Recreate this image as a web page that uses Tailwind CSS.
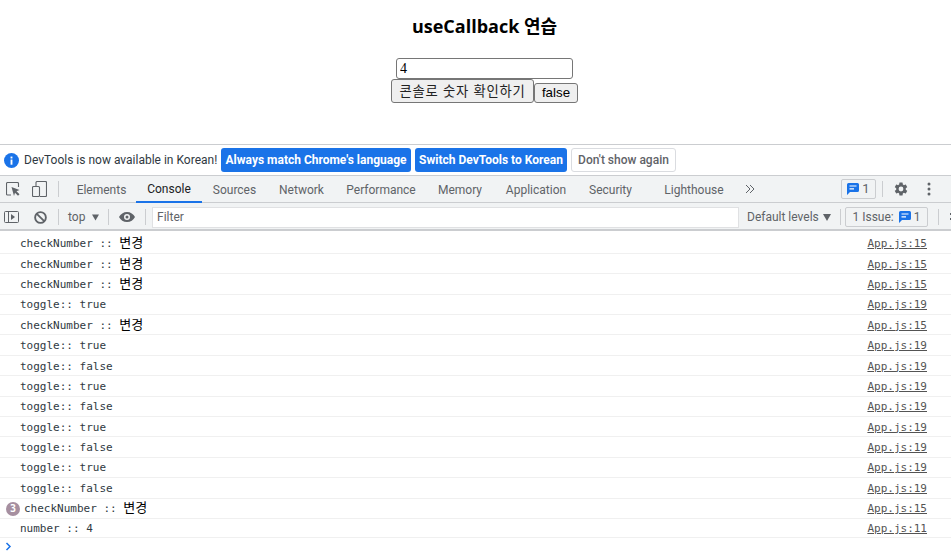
<!DOCTYPE html>
<html lang="ko">

<head>
    <meta charset="UTF-8">
    <title>useCallback</title>
    <script src="https://cdn.jsdelivr.net/npm/@tailwindcss/browser@4"></script>
</head>

<body class="bg-white h-[559px] w-[951px] overflow-hidden font-['Roboto','Noto_Sans_CJK_KR',sans-serif]">
    <!-- App -->
    <div class="h-[144px] w-[969px] flex flex-col items-center pt-[14px] font-['Open_Sans','Noto_Sans_CJK_KR',sans-serif]">
        <h3 class="text-[18px] leading-[24px] font-bold text-black mb-[20px]">useCallback 연습</h3>
        <input value="4" class="w-[177px] h-[21px] border border-[#767676] rounded-[3px] px-[3px] text-[14px] text-black font-['Liberation_Serif',serif] outline-none">
        <div class="flex items-end">
            <button class="w-[143px] h-[24px] bg-[#efefef] border border-[#767676] rounded-[3px] text-[13.33px] leading-none text-[#222] tracking-[0.75px] font-['Noto_Sans_CJK_KR',sans-serif]">콘솔로 숫자 확인하기</button>
            <button class="w-[44px] h-[20px] bg-[#efefef] border border-[#767676] rounded-[3px] text-[13.33px] leading-none text-black font-['Liberation_Sans',sans-serif]">false</button>
        </div>
    </div>

    <!-- Infobar -->
    <div class="h-[32px] border-y border-[#cbcdd0] flex items-center text-[12px] text-[#303942] pl-[4px]">
        <svg class="w-[15px] h-[15px] mr-[5px]" viewBox="0 0 16 16">
            <circle cx="8" cy="8" r="8" fill="#1a73e8" />
            <rect x="7" y="7" width="2" height="5.5" fill="#fff" />
            <rect x="7" y="3.8" width="2" height="2" fill="#fff" />
        </svg>
        <span class="w-[197px] whitespace-nowrap">DevTools is now available in Korean!</span>
        <button class="h-[24px] w-[190px] bg-[#1a73e8] text-white font-bold rounded-[3px] mr-[4px] whitespace-nowrap">Always match Chrome's language</button>
        <button class="h-[24px] w-[152px] bg-[#1a73e8] text-white font-bold rounded-[3px] mr-[4px] whitespace-nowrap">Switch DevTools to Korean</button>
        <button class="h-[24px] w-[105px] bg-white border border-[#dadce0] text-[#5f6368] font-medium rounded-[3px] whitespace-nowrap">Don't show again</button>
    </div>

    <!-- Tabs -->
    <div class="h-[27px] bg-[#f1f3f4] border-b border-[#cbcdd0] flex items-center text-[12px] text-[#5f6368]">
        <svg class="w-[14px] h-[14px] ml-[6px]" viewBox="0 0 14 14" fill="none">
            <path d="M5 13H1.500a1 1 0 0 1-1-1V1.500a1 1 0 0 1 1-1h10a1 1 0 0 1 1 1V5" stroke="#5f6368" stroke-width="1.100" />
            <path d="M5.500 5l8 3-3 1.300 3 3-1.500 1.500-3-3L8 14z" fill="#5f6368" />
        </svg>
        <svg class="w-[15px] h-[16px] ml-[12px]" viewBox="0 0 15 16" fill="none">
            <path d="M4 5V1.500a1 1 0 0 1 1-1h8.500a1 1 0 0 1 1 1v13a1 1 0 0 1-1 1H8" stroke="#5f6368" stroke-width="1.100" />
            <rect x="0.500" y="5.500" width="7" height="10" rx="1" stroke="#5f6368" stroke-width="1.100" />
        </svg>
        <div class="w-px h-[16px] bg-[#cbcdd0] ml-[11px] mr-[8px]"></div>
        <div class="flex items-center h-full pt-[2px]">
            <div class="w-[69px] text-center">Elements</div>
            <div class="w-[66px] h-[26px] self-end -mb-px flex items-center justify-center text-[#202124] border-b-2 border-[#1a73e8]">Console</div>
            <div class="w-[65px] text-center">Sources</div>
            <div class="w-[69px] text-center">Network</div>
            <div class="w-[90px] text-center">Performance</div>
            <div class="w-[68px] text-center">Memory</div>
            <div class="w-[84px] text-center">Application</div>
            <div class="w-[65px] text-center">Security</div>
            <div class="w-[102px] text-center">Lighthouse</div>
        </div>
        <svg class="w-[10px] h-[10px]" viewBox="0 0 10 10" fill="none" stroke="#5f6368" stroke-width="1">
            <path d="M1 1l4 4-4 4M5 1l4 4-4 4" />
        </svg>
        <div class="ml-auto flex items-center">
            <div class="w-[35px] h-[20px] border border-[#cbcdd0] rounded-[2px] flex items-center justify-center gap-[3px] text-[13px]">
                <svg class="w-[12px] h-[12px]" viewBox="0 0 12 12">
                    <path d="M1.500 0h9A1.500 1.500 0 0 1 12 1.500v6A1.500 1.500 0 0 1 10.500 9H3l-3 3V1.500A1.500 1.500 0 0 1 1.500 0z" fill="#1a73e8" />
                    <path d="M2.500 3h7M2.500 5.800h4.500" stroke="#fff" stroke-width="1.200" />
                </svg>
                <span>1</span>
            </div>
            <div class="w-px h-[16px] bg-[#cbcdd0] ml-[6px] mr-[10px]"></div>
            <svg class="w-[16px] h-[16px]" viewBox="0 0 24 24">
                <path fill="#5f6368" d="M19.140 12.940c.04-.300.060-.610.060-.940 0-.320-.020-.640-.070-.940l2.030-1.580a.490.490 0 0 0 .120-.610l-1.920-3.320a.488.488 0 0 0-.590-.220l-2.390.960c-.500-.380-1.030-.700-1.620-.940l-.360-2.540a.484.484 0 0 0-.480-.410h-3.840c-.240 0-.430.170-.470.410l-.360 2.540c-.590.240-1.130.570-1.620.940l-2.390-.960c-.220-.080-.470 0-.590.220L2.740 8.870c-.120.210-.080.470.120.610l2.030 1.580c-.050.300-.090.630-.090.940s.020.640.070.940l-2.030 1.580a.490.490 0 0 0-.120.610l1.920 3.320c.120.220.370.290.590.220l2.390-.960c.500.380 1.030.700 1.620.940l.360 2.540c.050.240.240.410.48.410h3.840c.240 0 .440-.170.470-.410l.360-2.540c.590-.240 1.130-.560 1.620-.940l2.390.960c.220.080.470 0 .590-.220l1.920-3.320c.120-.220.070-.470-.120-.610l-2.010-1.580zM12 15.600A3.600 3.600 0 1 1 12 8.400a3.600 3.600 0 0 1 0 7.200z" />
            </svg>
            <svg class="w-[4px] h-[14px] ml-[18px] mr-[20px]" viewBox="0 0 4 14" fill="#5f6368">
                <circle cx="2" cy="2" r="1.500" />
                <circle cx="2" cy="7" r="1.500" />
                <circle cx="2" cy="12" r="1.500" />
            </svg>
        </div>
    </div>

    <!-- Console toolbar -->
    <div class="h-[28px] pt-[2px] bg-[#f1f3f4] border-b-2 border-[#cbcdd0] flex items-center text-[12px] text-[#5f6368]">
        <svg class="w-[15px] h-[12px] ml-[4px] shrink-0" viewBox="0 0 15 12" fill="none">
            <rect x="0.500" y="0.500" width="14" height="11" rx="1" stroke="#5f6368" />
            <path d="M4.500 0.500v11" stroke="#5f6368" />
            <path d="M7 3l4 3-4 3z" fill="#5f6368" />
        </svg>
        <svg class="w-[13px] h-[13px] ml-[15px] shrink-0" viewBox="0 0 14 14" fill="none" stroke="#5f6368" stroke-width="2">
            <circle cx="7" cy="7" r="5.800" />
            <path d="M3 3l8 8" />
        </svg>
        <div class="w-px h-[16px] shrink-0 bg-[#cbcdd0] ml-[11px] mr-[9px]"></div>
        <span class="w-[24px] shrink-0">top</span>
        <svg class="w-[7px] h-[7px] shrink-0" viewBox="0 0 8 7" fill="#5f6368">
            <path d="M0 0h8L4 7z" />
        </svg>
        <div class="w-px h-[16px] shrink-0 bg-[#cbcdd0] ml-[9px] mr-[10px]"></div>
        <svg class="w-[16px] h-[12px] shrink-0" viewBox="0 0 16 12">
            <path fill="#5f6368" fill-rule="evenodd" d="M8 1c3.500 0 6.500 2 8 5-1.500 3-4.500 5-8 5S1.500 9 0 6c1.500-3 4.500-5 8-5zm0 2a3 3 0 1 0 0 6 3 3 0 0 0 0-6zm0 1.500a1.500 1.500 0 1 1 0 3 1.500 1.500 0 0 1 0-3z" />
        </svg>
        <div class="w-px h-[16px] shrink-0 bg-[#cbcdd0] ml-[10px] mr-[6px]"></div>
        <input placeholder="Filter" class="w-[587px] h-[21px] shrink-0 bg-white border border-[#e0e1e3] pl-[4px] text-[12px] placeholder:text-[#5f6368] outline-none">
        <span class="ml-[8px] w-[76px] shrink-0 whitespace-nowrap">Default levels</span>
        <svg class="w-[8px] h-[7px] shrink-0" viewBox="0 0 8 7" fill="#5f6368">
            <path d="M0 0h8L4 7z" />
        </svg>
        <div class="w-px h-[16px] shrink-0 bg-[#cbcdd0] ml-[9px] mr-[4px]"></div>
        <div class="w-[83px] h-[20px] shrink-0 border border-[#cbcdd0] rounded-[2px] flex items-center justify-center gap-[5px] whitespace-nowrap">
            <span>1 Issue:</span>
            <span class="flex items-center gap-[3px]">
                <svg class="w-[12px] h-[12px]" viewBox="0 0 12 12">
                    <path d="M1.500 0h9A1.500 1.500 0 0 1 12 1.500v6A1.500 1.500 0 0 1 10.500 9H3l-3 3V1.500A1.500 1.500 0 0 1 1.500 0z" fill="#1a73e8" />
                    <path d="M2.500 3h7M2.500 5.800h4.500" stroke="#fff" stroke-width="1.200" />
                </svg>
                1
            </span>
        </div>
        <div class="w-px h-[16px] shrink-0 bg-[#cbcdd0] ml-[10px]"></div>
        <svg class="w-[2px] h-[10px] shrink-0 ml-[11px]" viewBox="0 0 2 10" fill="#5f6368">
            <rect y="1" width="2" height="2" />
            <rect y="6" width="2" height="2" />
        </svg>
    </div>

    <!-- Console messages -->
    <div id="log" class="pt-[2.5px] text-[11px] leading-[15px] font-['DejaVu_Sans_Mono','Noto_Sans_CJK_KR',monospace] text-[#303942]">
        <div class="h-[20.4px] pt-px border-b border-[#f0f0f0] flex items-center pl-[20px] pr-[24px]"><span class="flex-1 whitespace-pre">checkNumber :: <span class="text-[13px] leading-none text-black">변경</span></span><a class="underline text-[#545454]">App.js:15</a></div>
        <div class="h-[20.4px] pt-px border-b border-[#f0f0f0] flex items-center pl-[20px] pr-[24px]"><span class="flex-1 whitespace-pre">checkNumber :: <span class="text-[13px] leading-none text-black">변경</span></span><a class="underline text-[#545454]">App.js:15</a></div>
        <div class="h-[20.4px] pt-px border-b border-[#f0f0f0] flex items-center pl-[20px] pr-[24px]"><span class="flex-1 whitespace-pre">checkNumber :: <span class="text-[13px] leading-none text-black">변경</span></span><a class="underline text-[#545454]">App.js:15</a></div>
        <div class="h-[20.4px] pt-px border-b border-[#f0f0f0] flex items-center pl-[20px] pr-[24px]"><span class="flex-1 whitespace-pre">toggle:: true</span><a class="underline text-[#545454]">App.js:19</a></div>
        <div class="h-[20.4px] pt-px border-b border-[#f0f0f0] flex items-center pl-[20px] pr-[24px]"><span class="flex-1 whitespace-pre">checkNumber :: <span class="text-[13px] leading-none text-black">변경</span></span><a class="underline text-[#545454]">App.js:15</a></div>
        <div class="h-[20.4px] pt-px border-b border-[#f0f0f0] flex items-center pl-[20px] pr-[24px]"><span class="flex-1 whitespace-pre">toggle:: true</span><a class="underline text-[#545454]">App.js:19</a></div>
        <div class="h-[20.4px] pt-px border-b border-[#f0f0f0] flex items-center pl-[20px] pr-[24px]"><span class="flex-1 whitespace-pre">toggle:: false</span><a class="underline text-[#545454]">App.js:19</a></div>
        <div class="h-[20.4px] pt-px border-b border-[#f0f0f0] flex items-center pl-[20px] pr-[24px]"><span class="flex-1 whitespace-pre">toggle:: true</span><a class="underline text-[#545454]">App.js:19</a></div>
        <div class="h-[20.4px] pt-px border-b border-[#f0f0f0] flex items-center pl-[20px] pr-[24px]"><span class="flex-1 whitespace-pre">toggle:: false</span><a class="underline text-[#545454]">App.js:19</a></div>
        <div class="h-[20.4px] pt-px border-b border-[#f0f0f0] flex items-center pl-[20px] pr-[24px]"><span class="flex-1 whitespace-pre">toggle:: true</span><a class="underline text-[#545454]">App.js:19</a></div>
        <div class="h-[20.4px] pt-px border-b border-[#f0f0f0] flex items-center pl-[20px] pr-[24px]"><span class="flex-1 whitespace-pre">toggle:: false</span><a class="underline text-[#545454]">App.js:19</a></div>
        <div class="h-[20.4px] pt-px border-b border-[#f0f0f0] flex items-center pl-[20px] pr-[24px]"><span class="flex-1 whitespace-pre">toggle:: true</span><a class="underline text-[#545454]">App.js:19</a></div>
        <div class="h-[20.4px] pt-px border-b border-[#f0f0f0] flex items-center pl-[20px] pr-[24px]"><span class="flex-1 whitespace-pre">toggle:: false</span><a class="underline text-[#545454]">App.js:19</a></div>
        <div class="h-[20.4px] pt-px border-b border-[#f0f0f0] flex items-center pl-[6px] pr-[24px]"><span class="w-[14px] h-[14px] mr-[4px] rounded-full bg-[#a68fa0] text-white text-[10px] font-bold flex items-center justify-center">3</span><span class="flex-1 whitespace-pre">checkNumber :: <span class="text-[13px] leading-none text-black">변경</span></span><a class="underline text-[#545454]">App.js:15</a></div>
        <div class="h-[19.5px] pt-px border-b border-[#f0f0f0] flex items-center pl-[20px] pr-[24px]"><span class="flex-1 whitespace-pre">number :: 4</span><a class="underline text-[#545454]">App.js:11</a></div>
        <div class="h-[16px] flex items-center pl-[5px]">
            <svg class="w-[7px] h-[9px]" viewBox="0 0 7 9" fill="none" stroke="#1a73e8" stroke-width="1.500">
                <path d="M1.500 1l3.500 3.500L1.500 8" />
            </svg>
        </div>
    </div>
</body>

</html>
